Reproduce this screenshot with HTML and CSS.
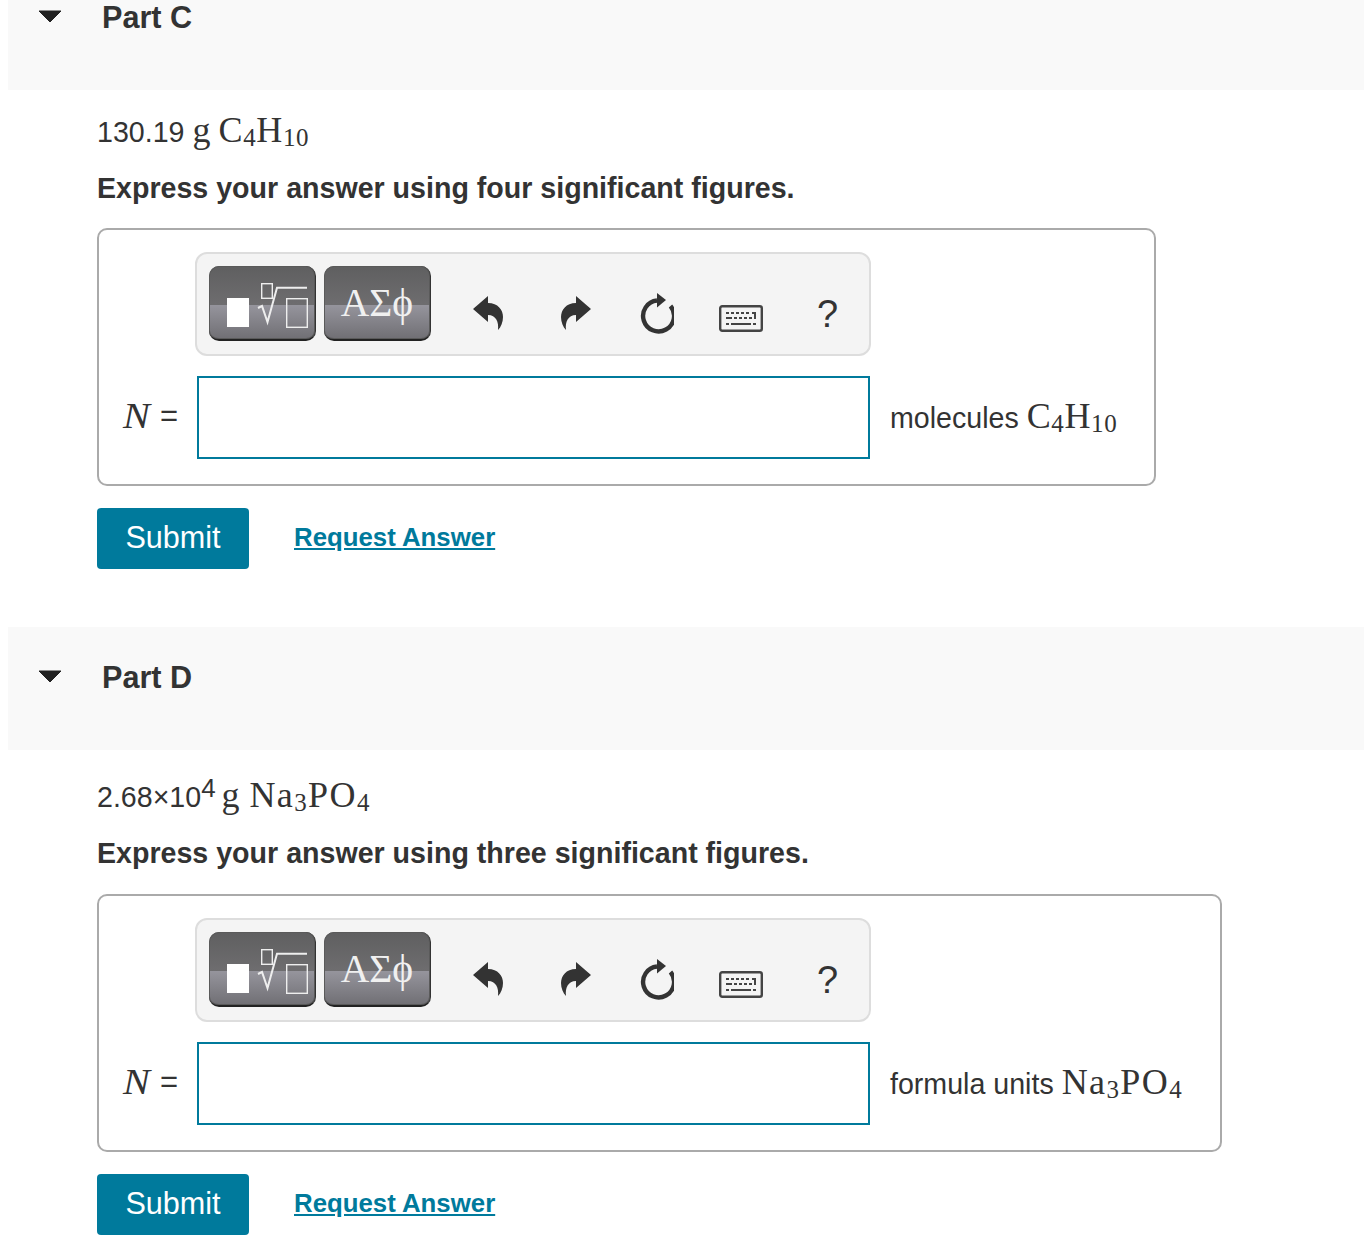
FILE: index.html
```html
<!DOCTYPE html>
<html lang="en">
<head>
  <meta charset="UTF-8" />
  <title>Part C and Part D</title>
  <link rel="stylesheet" href="styles.css">
</head>
<body>
  <section class="part part-first">
    <header class="part-head">
      <svg class="caret" width="24" height="13" viewBox="0 0 24 13"><path d="M1 1H23L12 12Z" fill="#222" stroke="#222" stroke-linejoin="round"/></svg>
      <h2>Part C</h2>
    </header>
    <div class="part-body">
      <p class="statement">130.19 <span class="math">g C<sub>4</sub>H<sub>10</sub></span></p>
      <p class="instruction">Express your answer using four significant figures.</p>
      <div class="answer-box">
        <div class="toolbar">
          <button class="tpl-btn" type="button">
            <svg width="107" height="75" viewBox="0 0 107 75">
              <rect x="18" y="32" width="22" height="29" fill="#fff"/>
              <rect x="52.7" y="17.7" width="10.6" height="14.6" fill="none" stroke="#eee" stroke-width="1.4"/>
              <path d="M49 42L53 40L58.5 56L68 21.7H98" fill="none" stroke="#eee" stroke-width="2"/>
              <rect x="77.7" y="32.7" width="20.6" height="28.6" fill="none" stroke="#eee" stroke-width="1.4"/>
            </svg>
          </button>
          <button class="tpl-btn greek" type="button">ΑΣϕ</button>
          <div class="tools">
            <svg class="undo" width="30" height="34" viewBox="0 0 30 34"><path d="M0 13L15 0V7C25 7 30 14 30 21C30 26 28 31 25 34C26 26 23 19 15 19V26Z" fill="#333"/></svg>
            <svg class="redo" width="30" height="34" viewBox="0 0 30 34"><path d="M30 13L15 0V7C5 7 0 14 0 21C0 26 2 31 5 34C4 26 7 19 15 19V26Z" fill="#333"/></svg>
            <svg class="reset" width="36" height="41" viewBox="0 0 36 41"><path d="M32.5 13A15.5 15.5 0 1 1 19 7.5" fill="none" stroke="#333" stroke-width="4.4"/><path d="M19 0L28 7L19 14.5Z" fill="#333"/></svg>
            <svg class="keys" width="44" height="27" viewBox="0 0 44 27">
              <rect x="1.2" y="1.2" width="41.6" height="24.6" rx="2" fill="none" stroke="#444" stroke-width="2.4"/>
              <path d="M7 7h3v2H7zM12 7h3v2h-3zM17 7h3v2h-3zM22 7h3v2h-3zM27 7h3v2h-3zM33 7h4v7h-2v-5h-2zM7 12h6v2H7zM15 12h3v2h-3zM20 12h3v2h-3zM25 12h3v2h-3zM30 12h3v2h-3zM7 18h3v2H7zM12 18h20v2H12zM34 18h3v2h-3z" fill="#444"/>
            </svg>
            <span class="help">?</span>
          </div>
        </div>
        <label class="answer-label" for="answerC"><i>N</i><span>=</span></label>
        <input class="answer-input" id="answerC" type="text" />
        <span class="unit">molecules <span class="math">C<sub>4</sub>H<sub>10</sub></span></span>
      </div>
      <div class="actions">
        <button class="submit" type="button">Submit</button>
        <a class="request" href="#">Request Answer</a>
      </div>
    </div>
  </section>

  <section class="part">
    <header class="part-head">
      <svg class="caret" width="24" height="13" viewBox="0 0 24 13"><path d="M1 1H23L12 12Z" fill="#222" stroke="#222" stroke-linejoin="round"/></svg>
      <h2>Part D</h2>
    </header>
    <div class="part-body">
      <p class="statement statement-tall">2.68×10<sup>4</sup> <span class="math math-wide">g Na<sub>3</sub>PO<sub>4</sub></span></p>
      <p class="instruction">Express your answer using three significant figures.</p>
      <div class="answer-box">
        <div class="toolbar">
          <button class="tpl-btn" type="button">
            <svg width="107" height="75" viewBox="0 0 107 75">
              <rect x="18" y="32" width="22" height="29" fill="#fff"/>
              <rect x="52.7" y="17.7" width="10.6" height="14.6" fill="none" stroke="#eee" stroke-width="1.4"/>
              <path d="M49 42L53 40L58.5 56L68 21.7H98" fill="none" stroke="#eee" stroke-width="2"/>
              <rect x="77.7" y="32.7" width="20.6" height="28.6" fill="none" stroke="#eee" stroke-width="1.4"/>
            </svg>
          </button>
          <button class="tpl-btn greek" type="button">ΑΣϕ</button>
          <div class="tools">
            <svg class="undo" width="30" height="34" viewBox="0 0 30 34"><path d="M0 13L15 0V7C25 7 30 14 30 21C30 26 28 31 25 34C26 26 23 19 15 19V26Z" fill="#333"/></svg>
            <svg class="redo" width="30" height="34" viewBox="0 0 30 34"><path d="M30 13L15 0V7C5 7 0 14 0 21C0 26 2 31 5 34C4 26 7 19 15 19V26Z" fill="#333"/></svg>
            <svg class="reset" width="36" height="41" viewBox="0 0 36 41"><path d="M32.5 13A15.5 15.5 0 1 1 19 7.5" fill="none" stroke="#333" stroke-width="4.4"/><path d="M19 0L28 7L19 14.5Z" fill="#333"/></svg>
            <svg class="keys" width="44" height="27" viewBox="0 0 44 27">
              <rect x="1.2" y="1.2" width="41.6" height="24.6" rx="2" fill="none" stroke="#444" stroke-width="2.4"/>
              <path d="M7 7h3v2H7zM12 7h3v2h-3zM17 7h3v2h-3zM22 7h3v2h-3zM27 7h3v2h-3zM33 7h4v7h-2v-5h-2zM7 12h6v2H7zM15 12h3v2h-3zM20 12h3v2h-3zM25 12h3v2h-3zM30 12h3v2h-3zM7 18h3v2H7zM12 18h20v2H12zM34 18h3v2h-3z" fill="#444"/>
            </svg>
            <span class="help">?</span>
          </div>
        </div>
        <label class="answer-label" for="answerD"><i>N</i><span>=</span></label>
        <input class="answer-input" id="answerD" type="text" />
        <span class="unit">formula units <span class="math math-wide">Na<sub>3</sub>PO<sub>4</sub></span></span>
      </div>
      <div class="actions">
        <button class="submit" type="button">Submit</button>
        <a class="request" href="#">Request Answer</a>
      </div>
    </div>
  </section>
</body>
</html>
```

FILE: styles.css
```css
body {
  margin: 0 0 0 8px;
  font-family: "Liberation Sans", Arial, sans-serif;
  font-size: 28.6px;
  color: #333;
  background: #fff;
}

.part {
  padding-bottom: 58px;
}

.part-first {
  margin-top: -33px;
}

.part-head {
  display: flex;
  align-items: flex-start;
  height: 123px;
  padding-left: 30px;
  background: #f9f9f9;
}

.caret {
  margin-top: 43px;
}

.part-head h2 {
  margin: 32px 0 0 40px;
  font-size: 30.6px;
  line-height: 36px;
  font-weight: 700;
}

.part-body {
  padding: 0 0 0 89px;
}

.statement {
  margin: 0;
  padding-top: 19px;
  height: 42px;
  line-height: 42px;
  white-space: nowrap;
}

.statement-tall {
  padding-top: 24px;
  word-spacing: -2px;
}

.statement sup {
  font-size: 26px;
  line-height: 0;
  vertical-align: 10px;
}

.math {
  font-family: "Liberation Serif", "Times New Roman", serif;
  font-size: 36px;
  letter-spacing: 0.6px;
  word-spacing: -2px;
}

.math-wide {
  letter-spacing: 1.4px;
}

.math sub {
  font-size: 25px;
  line-height: 0;
  vertical-align: -4px;
}

.instruction {
  margin: 19px 0 0;
  font-weight: 700;
  line-height: 36px;
}

.answer-box {
  display: inline-grid;
  grid-template-columns: 74px 673px auto;
  row-gap: 20px;
  align-items: center;
  margin-top: 22px;
  padding: 22px 37px 25px 24px;
  border: 2px solid #aaa;
  border-radius: 10px;
}

.statement-tall ~ .answer-box {
  margin-top: 23px;
}

.toolbar {
  grid-column: 2 / 4;
  display: flex;
  align-items: flex-start;
  gap: 8px;
  box-sizing: border-box;
  width: 676px;
  height: 104px;
  margin-left: -2px;
  padding: 12px;
  background: #f4f4f4;
  border: 2px solid #ddd;
  border-radius: 12px;
}

.tpl-btn {
  display: block;
  box-sizing: border-box;
  width: 107px;
  height: 75px;
  padding: 0;
  border: 0;
  border-right: 1px solid #333;
  border-bottom: 2px solid #222;
  border-radius: 10px;
  background: linear-gradient(#5f5f60 0, #6e6d6f 53%, #96959d 53%, #706f74 100%);
  box-shadow: inset 0 0 0 1px #5a5a5a;
  overflow: hidden;
}

.tpl-btn svg {
  display: block;
}

.greek {
  padding-bottom: 0;
  font-family: "Liberation Serif", serif;
  font-size: 39.5px;
  color: #f0f0f0;
}

.tools {
  display: flex;
  align-items: center;
  height: 41px;
  margin-top: 26px;
}

.undo {
  margin-left: 34px;
}

.redo {
  margin-left: 58px;
}

.reset {
  margin-left: 47px;
  margin-top: 2px;
}

.keys {
  margin-left: 45px;
  margin-top: 11px;
}

.help {
  margin-left: 54px;
  margin-top: 3px;
  font-size: 38px;
  line-height: 41px;
}

.answer-label {
  display: flex;
  align-items: center;
  padding-bottom: 4px;
  white-space: nowrap;
}

.answer-label i {
  display: inline-block;
  margin-right: 13px;
  font-family: "Liberation Serif", serif;
  font-size: 36px;
  transform: scaleX(1.12);
  transform-origin: left;
}

.answer-label span {
  font-size: 31px;
}

.answer-input {
  display: block;
  box-sizing: border-box;
  width: 673px;
  height: 83px;
  padding: 0 10px;
  border: 2px solid #007a9c;
  border-radius: 0;
  background: #fff;
  outline: none;
  font: inherit;
}

.unit {
  padding-left: 20px;
  padding-bottom: 4px;
  white-space: nowrap;
}

.actions {
  display: flex;
  align-items: center;
  gap: 45px;
  margin-top: 22px;
}

.submit {
  width: 152px;
  height: 61px;
  padding: 0 0 2px;
  border: 0;
  border-radius: 4px;
  background: #007a9c;
  color: #fff;
  font-family: inherit;
  font-size: 30.6px;
}

.request {
  padding-bottom: 2px;
  color: #007a9c;
  font-size: 25.8px;
  font-weight: 700;
}
```
